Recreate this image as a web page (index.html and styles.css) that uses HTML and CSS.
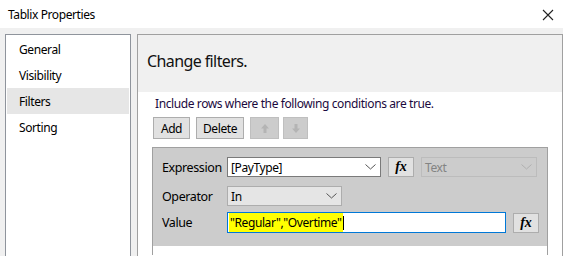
FILE: index.html
```html
<!DOCTYPE html>
<html lang="en">
<head>
    <meta charset="UTF-8">
    <title>Tablix Properties</title>
    <link rel="stylesheet" href="styles.css">
</head>
<body>
    <div class="titlebar">
        <span class="title">Tablix Properties</span>
        <svg class="close" width="12" height="12" viewBox="0 0 12 12">
            <path d="M1 1 L11 11 M11 1 L1 11" stroke="#222" stroke-width="1.1" fill="none"/>
        </svg>
    </div>
    <div class="content">
        <div class="nav">
            <div class="nav-item">General</div>
            <div class="nav-item">Visibility</div>
            <div class="nav-item selected">Filters</div>
            <div class="nav-item">Sorting</div>
        </div>
        <div class="main">
            <div class="header">Change filters.</div>
            <div class="body">
                <p class="hint">Include rows where the following conditions are true.</p>
                <div class="toolbar">
                    <button class="btn add">Add</button>
                    <button class="btn delete">Delete</button>
                    <div class="arrows">
                        <button class="btn arrow up">
                            <svg width="10" height="11" viewBox="0 0 10 11"><path d="M5 1 L9 5.5 L6.5 5.5 L6.5 10 L3.5 10 L3.5 5.5 L1 5.5 Z" fill="#b4b4b4"/></svg>
                        </button>
                        <button class="btn arrow down">
                            <svg width="10" height="11" viewBox="0 0 10 11"><path d="M5 10 L9 5.5 L6.5 5.5 L6.5 1 L3.5 1 L3.5 5.5 L1 5.5 Z" fill="#b4b4b4"/></svg>
                        </button>
                    </div>
                </div>
                <div class="filter">
                    <div class="filter-fields">
                        <div class="row">
                            <span class="label">Expression</span>
                            <div class="combo expr">
                                <span>[PayType]</span>
                                <svg width="11" height="6" viewBox="0 0 11 6"><path d="M0.5 0.5 L5.5 5 L10.5 0.5" stroke="#555" fill="none"/></svg>
                            </div>
                            <button class="fx">fx</button>
                            <div class="combo type">
                                <span>Text</span>
                                <svg width="11" height="6" viewBox="0 0 11 6"><path d="M0.5 0.5 L5.5 5 L10.5 0.5" stroke="#b0b0b0" fill="none"/></svg>
                            </div>
                        </div>
                        <div class="row op-row">
                            <span class="label">Operator</span>
                            <div class="combo op">
                                <span>In</span>
                                <svg width="11" height="6" viewBox="0 0 11 6"><path d="M0.5 0.5 L5.5 5 L10.5 0.5" stroke="#555" fill="none"/></svg>
                            </div>
                        </div>
                        <div class="row value-row">
                            <span class="label">Value</span>
                            <div class="value"><mark>"Regular","Overtime"</mark><span class="caret"></span></div>
                            <button class="fx">fx</button>
                        </div>
                    </div>
                </div>
            </div>
        </div>
    </div>
</body>
</html>
```

FILE: styles.css
```css
body {
    margin: 0;
    background-color: #f0f0f0;
    font-family: "Noto Sans", "Open Sans", sans-serif;
    font-size: 12px;
    letter-spacing: -0.4px;
    color: #000;
    overflow: hidden;
    height: 256px;
}
.titlebar {
    height: 28px;
    background-color: #fff;
    display: flex;
    align-items: center;
    justify-content: space-between;
    padding: 0 9px 0 8px;
    box-sizing: border-box;
}
.close {
    margin-top: 1px;
}
.content {
    display: flex;
    gap: 6px;
    padding: 6px 0 0 5px;
}
.nav {
    width: 124px;
    height: 221px;
    background-color: #fff;
    border: 1px solid #8f949c;
    border-bottom: none;
    padding-top: 1px;
}
.nav-item {
    height: 26px;
    line-height: 27px;
    padding-left: 12px;
    margin: 0 1px;
}
.nav-item.selected {
    background-color: #e6e6e6;
}
.main {
    width: 424px;
    height: 222px;
    border: 1px solid #a0a0a0;
    border-bottom: none;
    background-color: #fff;
}
.header {
    height: 57px;
    background-color: #f0f0f0;
    font-size: 16px;
    letter-spacing: -0.6px;
    line-height: 52px;
    padding-left: 9px;
    color: #111;
}
.body {
    padding: 4px 0 0 14px;
}
.hint {
    margin: 0 0 0 3px;
    line-height: 16px;
    color: #1b0a3e;
}
.toolbar {
    display: flex;
    gap: 6px;
    margin-top: 5px;
    padding-left: 1px;
}
.btn {
    height: 22px;
    background-color: #e1e1e1;
    border: 1px solid #adadad;
    font-family: inherit;
    font-size: 12px;
    letter-spacing: inherit;
    padding: 0;
    color: #000;
}
.add {
    width: 37px;
}
.delete {
    width: 48px;
}
.arrows {
    display: flex;
    gap: 4px;
}
.btn.arrow {
    display: flex;
    align-items: center;
    justify-content: center;
    background-color: #cccccc;
    border-color: #bfbfbf;
}
.up {
    width: 29px;
}
.down {
    width: 25px;
}
.filter {
    margin-top: 8px;
    width: 394px;
    height: 107px;
    border: 1px solid #a0a0a0;
    border-bottom: none;
    background-color: #fff;
}
.filter-fields {
    background-color: #cccccc;
    padding: 9px 0 13px 9px;
}
.row {
    display: flex;
    align-items: center;
    height: 20px;
}
.op-row {
    margin-top: 9px;
}
.value-row {
    margin-top: 6px;
    height: 21px;
}
.label {
    width: 65px;
    font-size: 12.5px;
}
.combo {
    height: 20px;
    box-sizing: border-box;
    display: flex;
    align-items: center;
    justify-content: space-between;
    padding: 0 4px 0 3px;
}
.expr {
    width: 154px;
    background-color: #fff;
    border: 1px solid #7a7a7a;
    margin-right: 7px;
}
.type {
    width: 116px;
    border: 1px solid #bcbcbc;
    color: #838383;
    margin-left: 7px;
}
.op {
    width: 115px;
    background-color: #e5e5e5;
    border: 1px solid #adadad;
}
.fx {
    width: 26px;
    height: 20px;
    background-color: #e1e1e1;
    border: 1px solid #adadad;
    font-family: "Liberation Serif", serif;
    font-style: italic;
    font-weight: bold;
    font-size: 14px;
    letter-spacing: 0;
    padding: 0;
    line-height: 16px;
}
.value {
    width: 279px;
    height: 21px;
    box-sizing: border-box;
    background-color: #fff;
    border: 1px solid #0078d7;
    display: flex;
    align-items: center;
    padding-left: 1px;
    margin-right: 7px;
}
mark {
    background-color: #ffff00;
    padding: 1px 1px;
}
.caret {
    width: 1px;
    height: 14px;
    background-color: #000;
}
```
